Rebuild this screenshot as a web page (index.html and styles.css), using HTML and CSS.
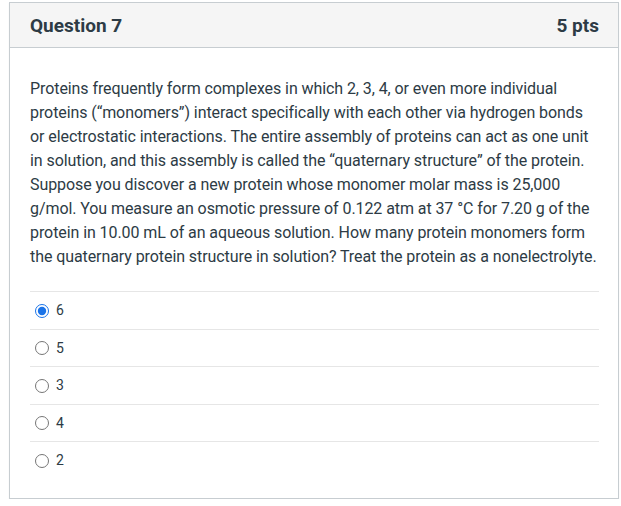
FILE: index.html
```html
<!DOCTYPE html>
<html>
<head>
<meta charset="utf-8">
<link rel="stylesheet" href="styles.css">
</head>
<body>
<div class="card">
  <div class="header">
    <span class="title">Question 7</span>
    <span class="pts">5 pts</span>
  </div>
  <div class="body">
    <p class="text">Proteins frequently form complexes in which 2, 3, 4, or even more individual proteins (“monomers”) interact specifically with each other via hydrogen bonds or electrostatic interactions. The entire assembly of proteins can act as one unit in solution, and this assembly is called the “quaternary structure” of the protein. Suppose you discover a new protein whose monomer molar mass is 25,000 g/mol. You measure an osmotic pressure of 0.122 atm at 37 °C for 7.20 g of the protein in 10.00 mL of an aqueous solution. How many protein monomers form the quaternary protein structure in solution? Treat the protein as a nonelectrolyte.</p>
    <div class="answers">
      <label class="answer"><input type="radio" name="q7" checked> 6</label>
      <label class="answer"><input type="radio" name="q7"> 5</label>
      <label class="answer"><input type="radio" name="q7"> 3</label>
      <label class="answer"><input type="radio" name="q7"> 4</label>
      <label class="answer"><input type="radio" name="q7"> 2</label>
    </div>
  </div>
</div>
</body>
</html>
```
FILE: styles.css
```css
html, body {
  margin: 0;
  padding: 0;
  background: #fff;
}
body {
  padding: 2px 2px 0 9px;
  font-family: Roboto, "Liberation Sans", sans-serif;
  color: #2d3b45;
}
.card {
  width: 610px;
  box-sizing: border-box;
  border: 1px solid #c7cdd1;
  height: 497px;
  box-shadow: 0 1px 1px rgba(0,0,0,0.08);
}
.header {
  display: flex;
  justify-content: space-between;
  align-items: center;
  height: 44px;
  padding: 0 19px 0 20px;
  background: #f5f5f5;
  border-bottom: 1px solid #c7cdd1;
  font-weight: 700;
  font-size: 19px;
}
.body {
  padding: 29px 19px 0 20px;
}
.text {
  margin: 0;
  font-size: 16px;
  line-height: 24px;
  letter-spacing: -0.08px;
}
.answers {
  margin-top: 22px;
  display: flex;
  flex-direction: column;
}
.answer {
  display: flex;
  align-items: center;
  height: 37.5px;
  box-sizing: border-box;
  border-top: 1px solid #e6e6e6;
  font-size: 14px;
  gap: 4px;
}
.answer input {
  margin: 1px 3px 0 5px;
  width: 14px;
  height: 14px;
  accent-color: #1a73e8;
}
```
